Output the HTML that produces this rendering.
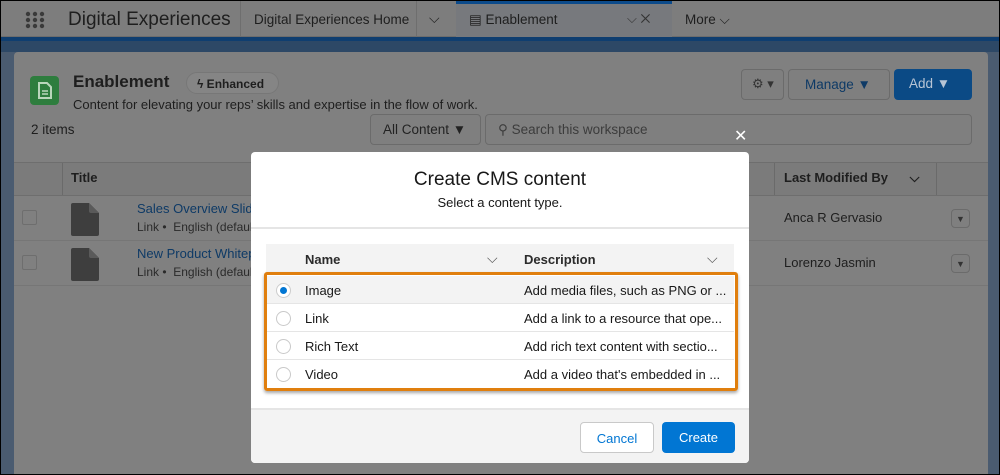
<!DOCTYPE html>
<html><head><style>
*{box-sizing:border-box;margin:0;padding:0}
body{width:1000px;height:475px;overflow:hidden;background:#000;font-family:"Liberation Sans",sans-serif;position:relative}
.a{position:absolute}
.frame{left:1px;top:1px;width:998px;height:473px;background:#4a5b70;overflow:hidden}
.nav{left:0;top:0;width:998px;height:36px;background:#7d7d7d;border-bottom:1px solid #6d6d6d}
.t{color:#1e1e1e;white-space:nowrap}
.card{left:13px;top:51px;width:974px;height:440px;background:#808080;border-radius:4px}
.btn{border:1px solid #6b6b6b;border-radius:4px;background:#7f7f7f}
.row{border-bottom:1px solid #767676}
.modal{left:251px;top:152px;width:498px;height:311px;background:#fff;border-radius:4px;overflow:hidden}
.r{left:15px;width:468px;height:28px;border-bottom:1px solid #e5e5e5;font-size:13px;color:#181818}
.rad{left:10px;top:7px;width:15px;height:15px;border:1px solid #c9c9c9;border-radius:50%;background:#fff}
</style></head><body>
<div class="a frame">
 <div class="a nav">
  <div class="a" style="left:24px;top:10px;width:20px;height:18px">
   <svg width="20" height="18"><g fill="#3a3a3a"><circle cx="3" cy="3" r="2.2"/><circle cx="10" cy="3" r="2.2"/><circle cx="17" cy="3" r="2.2"/><circle cx="3" cy="9" r="2.2"/><circle cx="10" cy="9" r="2.2"/><circle cx="17" cy="9" r="2.2"/><circle cx="3" cy="15" r="2.2"/><circle cx="10" cy="15" r="2.2"/><circle cx="17" cy="15" r="2.2"/></g></svg>
  </div>
  <div class="a t" style="left:67px;top:8px;font-size:19px">Digital Experiences</div>
  <div class="a" style="left:239px;top:0;width:1px;height:36px;background:#6e6e6e"></div>
  <div class="a t" style="left:253px;top:11px;font-size:13.5px">Digital Experiences Home</div>
  <div class="a" style="left:415px;top:0;width:1px;height:36px;background:#6e6e6e"></div>
  <div class="a t" style="left:428px;top:9px;font-size:14px">⌵</div>
  <div class="a" style="left:455px;top:0;width:216px;height:36px;background:#77797d;border-top:3px solid #0b4a8a"></div>
  <div class="a t" style="left:468px;top:11px;font-size:13.5px">▤ Enablement</div>
  <div class="a t" style="left:626px;top:10px;font-size:13px;color:#333">⌵ ✕</div>
  <div class="a t" style="left:684px;top:11px;font-size:13.5px">More ⌵</div>
 </div>
 <div class="a" style="left:0;top:36px;width:998px;height:4px;background:#0f3e70"></div>
 <div class="a" style="left:0;top:40px;width:998px;height:11px;background:#2d4866"></div>
 <div class="a card">
  <div class="a" style="left:16px;top:24px;width:29px;height:29px;background:#2e7d3e;border-radius:4px"><svg width="29" height="29"><path d="M9 7h8l4 4v11H9z" fill="none" stroke="#b9d6bb" stroke-width="2"/><path d="M12 15h6M12 18h6" stroke="#b9d6bb" stroke-width="1.6"/></svg></div>
  <div class="a t" style="left:59px;top:20px;font-size:17px;font-weight:bold">Enablement</div>
  <div class="a t" style="left:172px;top:20px;width:93px;height:22px;background:#858585;border:1px solid #777;border-radius:11px;font-size:12px;font-weight:bold;padding:4px 0 0 10px">ϟ Enhanced</div>
  <div class="a t" style="left:59px;top:45px;font-size:13px">Content for elevating your reps’ skills and expertise in the flow of work.</div>
  <div class="a t" style="left:17px;top:70px;font-size:13.5px">2 items</div>
  <div class="a btn" style="left:727px;top:17px;width:43px;height:31px;font-size:13px;color:#333;padding:6px 0 0 10px">⚙ ▾</div>
  <div class="a btn" style="left:774px;top:17px;width:102px;height:31px;font-size:13.5px;color:#0e3a66;padding:7px 0 0 16px">Manage ▼</div>
  <div class="a" style="left:880px;top:17px;width:78px;height:31px;background:#0b4a85;border-radius:4px;font-size:13.5px;color:#b8c5d5;padding:7px 0 0 15px">Add ▼</div>
  <div class="a btn" style="left:356px;top:62px;width:111px;height:31px;font-size:13.5px;color:#222;padding:7px 0 0 12px">All Content ▼</div>
  <div class="a btn" style="left:471px;top:62px;width:487px;height:31px;font-size:13.5px;color:#3c3c3c;padding:7px 0 0 12px">⚲ Search this workspace</div>
  <div class="a" style="left:0;top:110px;width:974px;height:34px;background:#7b7b7b;border-top:1px solid #6e6e6e;border-bottom:1px solid #6e6e6e"></div>
  <div class="a" style="left:48px;top:111px;width:1px;height:32px;background:#6a6a6a"></div>
  <div class="a t" style="left:57px;top:118px;font-size:13px;font-weight:bold">Title</div>
  <div class="a" style="left:760px;top:111px;width:1px;height:32px;background:#6a6a6a"></div>
  <div class="a t" style="left:770px;top:118px;font-size:13px;font-weight:bold">Last Modified By &nbsp; &nbsp; &nbsp;⌵</div>
  <div class="a" style="left:922px;top:111px;width:1px;height:32px;background:#6a6a6a"></div>
  <div class="a row" style="left:0;top:144px;width:974px;height:45px"></div>
  <div class="a row" style="left:0;top:189px;width:974px;height:45px"></div>
  <div class="a" style="left:8px;top:158px;width:15px;height:15px;border:1px solid #6e6e6e;border-radius:2px"></div>
  <div class="a" style="left:8px;top:203px;width:15px;height:15px;border:1px solid #6e6e6e;border-radius:2px"></div>
  <svg class="a" style="left:57px;top:151px" width="28" height="33"><path d="M2 0h16l10 10v21a2 2 0 0 1-2 2H2a2 2 0 0 1-2-2V2a2 2 0 0 1 2-2z" fill="#3e3e3e"/><path d="M18 0l10 10h-8a2 2 0 0 1-2-2z" fill="#5a5a5a"/></svg>
  <svg class="a" style="left:57px;top:196px" width="28" height="33"><path d="M2 0h16l10 10v21a2 2 0 0 1-2 2H2a2 2 0 0 1-2-2V2a2 2 0 0 1 2-2z" fill="#3e3e3e"/><path d="M18 0l10 10h-8a2 2 0 0 1-2-2z" fill="#5a5a5a"/></svg>
  <div class="a t" style="left:123px;top:149px;font-size:13px;color:#0e3a66">Sales Overview Slides</div>
  <div class="a t" style="left:123px;top:168px;font-size:12px;color:#2a2a2a">Link • &nbsp;English (default)</div>
  <div class="a t" style="left:123px;top:194px;font-size:13px;color:#0e3a66">New Product Whitepaper</div>
  <div class="a t" style="left:123px;top:213px;font-size:12px;color:#2a2a2a">Link • &nbsp;English (default)</div>
  <div class="a t" style="left:770px;top:158px;font-size:13px">Anca R Gervasio</div>
  <div class="a t" style="left:770px;top:203px;font-size:13px">Lorenzo Jasmin</div>
  <div class="a btn" style="left:937px;top:157px;width:19px;height:19px;font-size:9px;color:#333;padding:4px 0 0 4px">▼</div>
  <div class="a btn" style="left:937px;top:202px;width:19px;height:19px;font-size:9px;color:#333;padding:4px 0 0 4px">▼</div>
 </div>
</div>
<div class="a" style="left:734px;top:126px;color:#fff;font-size:16px">✕</div>
<div class="a modal">
 <div class="a t" style="left:0;top:17px;width:498px;text-align:center;font-size:19px;color:#181818">Create CMS content</div>
 <div class="a t" style="left:0;top:43px;width:498px;text-align:center;font-size:13px;color:#181818">Select a content type.</div>
 <div class="a" style="left:0;top:75px;width:498px;height:2px;background:#e5e5e5"></div>
 <div class="a" style="left:15px;top:92px;width:468px;height:30px;background:#f3f3f3"></div>
 <div class="a t" style="left:54px;top:100px;font-size:13px;font-weight:bold;color:#2b2b2b">Name</div>
 <div class="a t" style="left:236px;top:98px;font-size:14px;color:#555">⌵</div>
 <div class="a t" style="left:273px;top:100px;font-size:13px;font-weight:bold;color:#2b2b2b">Description</div>
 <div class="a t" style="left:456px;top:98px;font-size:14px;color:#555">⌵</div>
 <div class="a r" style="top:124px;background:#f3f3f3"><div class="a rad" style="border-color:#ccc"><div class="a" style="left:3px;top:3px;width:7px;height:7px;border-radius:50%;background:#0176d3"></div></div><div class="a" style="left:39px;top:7px">Image</div><div class="a" style="left:258px;top:7px">Add media files, such as PNG or ...</div></div>
 <div class="a r" style="top:152px"><div class="a rad"></div><div class="a" style="left:39px;top:7px">Link</div><div class="a" style="left:258px;top:7px">Add a link to a resource that ope...</div></div>
 <div class="a r" style="top:180px"><div class="a rad"></div><div class="a" style="left:39px;top:7px">Rich Text</div><div class="a" style="left:258px;top:7px">Add rich text content with sectio...</div></div>
 <div class="a r" style="top:208px;border:none"><div class="a rad"></div><div class="a" style="left:39px;top:7px">Video</div><div class="a" style="left:258px;top:7px">Add a video that's embedded in ...</div></div>
 <div class="a" style="left:13px;top:120px;width:474px;height:119px;border:3px solid #e07f0e;border-radius:3px;box-shadow:0 2px 3px rgba(0,0,0,.35)"></div>
 <div class="a" style="left:0;top:256px;width:498px;height:55px;background:#f3f3f3;border-top:2px solid #e5e5e5"></div>
 <div class="a" style="left:329px;top:270px;width:74px;height:31px;background:#fff;border:1px solid #c9c9c9;border-radius:4px;color:#0176d3;font-size:13px;text-align:center;padding-top:8px">Cancel</div>
 <div class="a" style="left:411px;top:270px;width:73px;height:31px;background:#0176d3;border-radius:4px;color:#fff;font-size:13px;text-align:center;padding-top:8px">Create</div>
</div>
</body></html>
